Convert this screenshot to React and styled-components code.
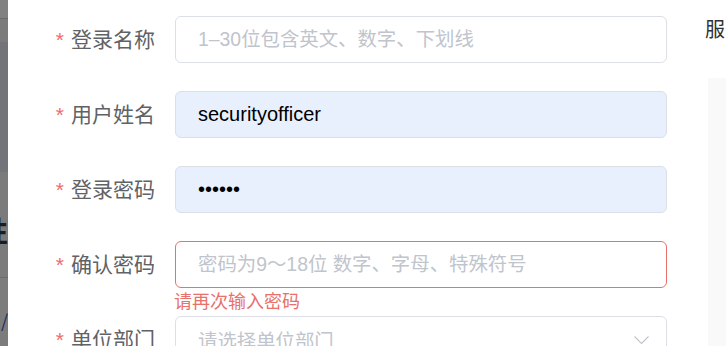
import styled, { createGlobalStyle } from "styled-components";

const GlobalStyle = createGlobalStyle`
  html, body {
    margin: 0;
    width: 726px;
    height: 346px;
    overflow: hidden;
    background: #ffffff;
    font-family: "Liberation Sans", "Noto Sans CJK SC", sans-serif;
  }
`;

const Page = styled.div`
  display: flex;
  width: 726px;
  height: 346px;
  overflow: hidden;
`;

// dimmed page behind the dialog
const Backdrop = styled.div`
  width: 8px;
  flex-shrink: 0;
  display: flex;
  flex-direction: column;
  overflow: hidden;
`;

const Band = styled.div`
  height: ${(p) => p.$h}px;
  flex-shrink: 0;
  background: ${(p) => p.$bg};
  border-bottom: ${(p) => (p.$line ? "1px solid #6c6c6c" : "none")};
  display: flex;
  justify-content: flex-end;
  align-items: ${(p) => p.$align || "center"};
  overflow: hidden;
  white-space: nowrap;
`;

const PeekText = styled.span`
  font-family: "Noto Sans CJK SC", sans-serif;
  font-size: ${(p) => p.$size}px;
  line-height: 1;
  color: ${(p) => p.$color};
  font-weight: ${(p) => p.$weight || 400};
  margin-top: ${(p) => p.$mt || 0}px;
`;

const Dialog = styled.div`
  flex: 1;
  display: flex;
  background: #ffffff;
  overflow: hidden;
`;

const Form = styled.div`
  display: flex;
  flex-direction: column;
  padding-top: 16px;
  flex-shrink: 0;
`;

const FormItem = styled.div`
  display: grid;
  grid-template-columns: 167px 492px;
  align-items: center;
  margin-bottom: ${(p) => (p.$error ? 0 : 28)}px;
`;

const Label = styled.label`
  padding-right: 20px;
  text-align: right;
  font-size: 21px;
  line-height: 47px;
  color: #606266;
  font-family: "Liberation Sans", "Noto Sans CJK SC", sans-serif;

  &::before {
    content: "*";
    color: #f06c6a;
    margin-right: 7px;
  }
`;

const Input = styled.input`
  box-sizing: border-box;
  width: 492px;
  height: 47px;
  margin: 0;
  padding: 0 22px;
  border: 1px solid ${(p) => (p.$error ? "#e8716c" : "#dcdfe6")};
  border-radius: 6px;
  background: ${(p) => (p.$filled ? "#e8f0fe" : "#ffffff")};
  color: #000000;
  font-size: 20px;
  font-family: "Liberation Sans", "Noto Sans CJK SC", sans-serif;
  outline: none;

  &::placeholder {
    color: #c0c4cc;
    font-size: 19.4px;
  }
`;

const Select = styled.div`
  box-sizing: border-box;
  width: 492px;
  height: 47px;
  padding: 0 17px 0 22px;
  border: 1px solid #dcdfe6;
  border-radius: 6px;
  display: flex;
  align-items: center;
  justify-content: space-between;
  font-size: 19.4px;
  color: #c0c4cc;
`;

const ErrorText = styled.div`
  margin-left: 166px;
  height: 28px;
  line-height: 28px;
  font-size: 18px;
  color: #e8716c;
`;

const Side = styled.div`
  flex: 1;
  margin-left: 38px;
  padding-top: 20px;
  display: flex;
  flex-direction: column;
  overflow: hidden;
`;

const SideTitle = styled.div`
  font-size: 20px;
  line-height: 20px;
  color: #303133;
  white-space: nowrap;
`;

const SidePanel = styled.div`
  flex: 1;
  margin-top: 38px;
  margin-left: 3px;
  background: #f9f9fa;
`;

const Chevron = () => (
  <svg width="15" height="8" viewBox="0 0 15 8" fill="none">
    <polyline
      points="0.5,0.5 7.5,7.5 14.5,0.5"
      stroke="#c0c4cc"
      strokeWidth="1.1"
    />
  </svg>
);

export default function App() {
  return (
    <>
      <GlobalStyle />
      <Page>
        <Backdrop>
          <Band $h={18} $bg="#818181" $line />
          <Band $h={23} $bg="#7b7b7b" />
          <Band $h={130} $bg="#737479" />
          <Band $h={105} $bg="#7b7b7b" $line>
            <PeekText $size={28} $color="#1c1c1c" $weight={700} $mt={10}>
              性
            </PeekText>
          </Band>
          <Band $h={69} $bg="#7c7c7c" $align="flex-start">
            <PeekText $size={18} $color="#1d2b5c" $mt={33}>
              */
            </PeekText>
          </Band>
        </Backdrop>

        <Dialog>
          <Form>
            <FormItem>
              <Label>登录名称</Label>
              <Input placeholder="1–30位包含英文、数字、下划线" readOnly />
            </FormItem>
            <FormItem>
              <Label>用户姓名</Label>
              <Input $filled value="securityofficer" readOnly />
            </FormItem>
            <FormItem>
              <Label>登录密码</Label>
              <Input $filled type="password" value="123456" readOnly />
            </FormItem>
            <FormItem $error>
              <Label>确认密码</Label>
              <Input
                $error
                type="password"
                placeholder="密码为9～18位 数字、字母、特殊符号"
                readOnly
              />
            </FormItem>
            <ErrorText>请再次输入密码</ErrorText>
            <FormItem>
              <Label>单位部门</Label>
              <Select>
                <span>请选择单位部门</span>
                <Chevron />
              </Select>
            </FormItem>
          </Form>

          <Side>
            <SideTitle>服务器权限</SideTitle>
            <SidePanel />
          </Side>
        </Dialog>
      </Page>
    </>
  );
}
